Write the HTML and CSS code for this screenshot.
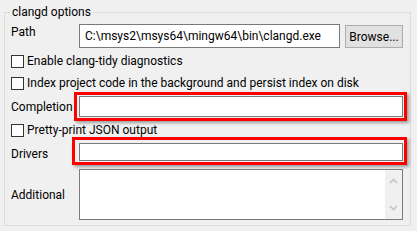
FILE: index.html
```html
<!DOCTYPE html>
<html>
<head>
<meta charset="utf-8">
<link rel="stylesheet" href="styles.css">
</head>
<body>
<div class="group">
  <div class="legend">clangd options</div>
  <div class="row row-path">
    <span class="lbl lbl-top">Path</span>
    <input class="field path" type="text" value="C:\msys2\msys64\mingw64\bin\clangd.exe">
    <button class="btn" type="button">Browse...</button>
  </div>
  <label class="check c1"><span class="cb"></span>Enable clang-tidy diagnostics</label>
  <label class="check c2"><span class="cb"></span>Index project code in the background and persist index on disk</label>
  <div class="row row-mark completion">
    <span class="lbl">Completion</span>
    <span class="mark mark-c"><span class="field box-c"></span></span>
  </div>
  <label class="check c3"><span class="cb"></span>Pretty-print JSON output</label>
  <div class="row row-mark drivers">
    <span class="lbl lbl-low">Drivers</span>
    <span class="mark mark-d"><span class="field box-d"></span></span>
  </div>
  <div class="row row-add">
    <span class="lbl">Additional</span>
    <div class="area">
      <div class="sb">
        <svg width="9" height="6" viewBox="0 0 9 6"><path d="M1 5 L4.5 1.5 L8 5" fill="none" stroke="#c4c4c4" stroke-width="1.6"/></svg>
        <svg width="9" height="6" viewBox="0 0 9 6"><path d="M1 1 L4.5 4.5 L8 1" fill="none" stroke="#c4c4c4" stroke-width="1.6"/></svg>
      </div>
    </div>
  </div>
</div>
</body>
</html>
```

FILE: styles.css
```css
* { box-sizing: border-box; }
html, body { margin: 0; padding: 0; }
body {
  width: 417px;
  height: 231px;
  background: #f0f0f0;
  font-family: Roboto, "Liberation Sans", sans-serif;
  font-size: 12px;
  color: #000;
  overflow: hidden;
}
.group {
  position: relative;
  margin: 12px 6px 0 4px;
  width: 407px;
  height: 214px;
  border: 1px solid #dcdcdc;
  padding: 11px 7px 0 6px;
}
.legend {
  position: absolute;
  top: -9px;
  left: 5px;
  padding: 0 2px;
  line-height: 16px;
  background: #f0f0f0;
}
.row {
  display: grid;
  grid-template-columns: 68px 1fr;
  align-items: center;
}
.row-path {
  grid-template-columns: 68px 261px 58px;
  column-gap: 0;
  height: 24px;
}
.lbl { line-height: 16px; white-space: nowrap; }
.lbl-top { align-self: start; margin-top: 0; }
.lbl-low { padding-top: 6px; }
.field {
  display: block;
  border: 1px solid #7a7a7a;
  background: #fff;
}
input.field {
  height: 24px;
  width: 261px;
  margin: 0;
  padding: 0 0 1px 5px;
  font: inherit;
  color: #000;
  outline: none;
}
.btn {
  margin: 1px 0 0 5px;
  width: 58px;
  height: 23px;
  align-self: start;
  padding: 0;
  border: 1px solid #adadad;
  background: #e1e1e1;
  font: inherit;
  color: #000;
  line-height: 20px;
}
.check {
  display: flex;
  align-items: center;
  height: 13px;
  line-height: 13px;
  white-space: nowrap;
}
.cb {
  width: 13px;
  height: 13px;
  border: 1px solid #333;
  background: #fff;
  margin-right: 3px;
  flex: none;
}
.c1 { margin-top: 7px; }
.c2 { margin-top: 9px; }
.completion { margin-top: 2px; height: 29px; }
.c3 { margin-top: 3px; }
.drivers { margin-top: 0; height: 28px; }
.mark {
  display: block;
  border: 3px solid #ff0000;
  box-shadow: 2px 2px 3px rgba(0, 0, 0, 0.35);
}
.mark-c {
  margin: 0 -4px 0 -5px;
  padding: 1px 1px 1px 2px;
}
.box-c { height: 21px; }
.mark-d {
  margin: 0 -4px 0 -7px;
  padding: 3px 1px 1px 4px;
}
.box-d { height: 18px; }
.row-add { margin-top: 4px; height: 51px; }
.area {
  height: 51px;
  border: 1px solid #7a7a7a;
  background: #fff;
  display: flex;
  justify-content: flex-end;
}
.sb {
  width: 17px;
  height: 100%;
  background: #f0f0f0;
  display: flex;
  flex-direction: column;
  justify-content: space-between;
  align-items: center;
  padding: 8px 0 8px;
}
.sb svg { display: block; }
```
